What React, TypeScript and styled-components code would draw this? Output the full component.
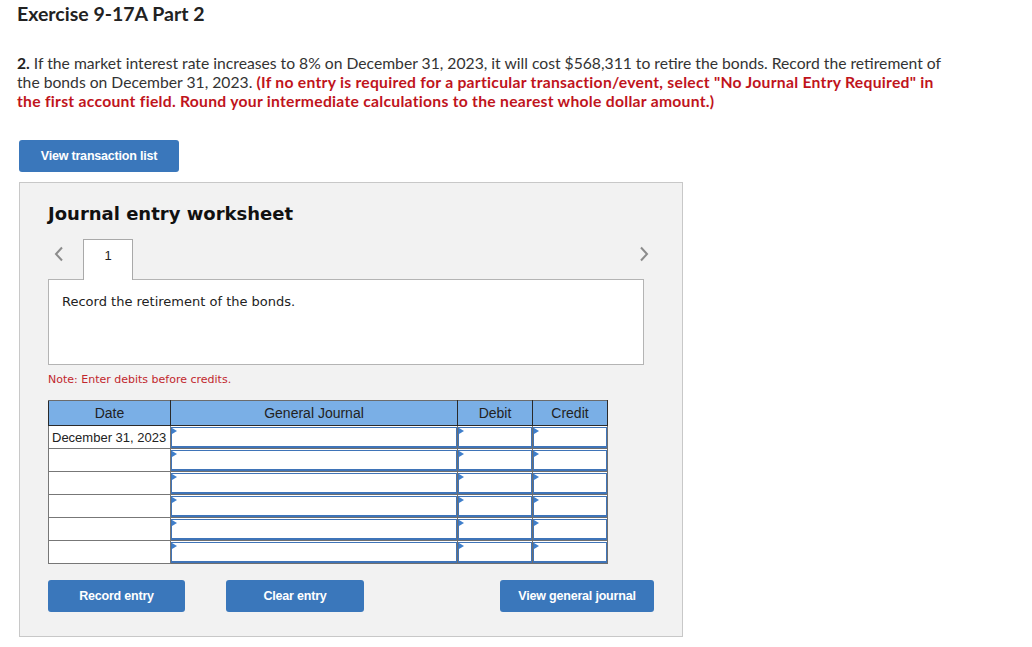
import React from "react";
import styled, { createGlobalStyle } from "styled-components";

const GlobalStyle = createGlobalStyle`
  html, body {
    margin: 0;
    padding: 0;
    background: #ffffff;
  }
  body {
    font-family: "Lato", "Liberation Sans", sans-serif;
    color: #333333;
  }
`;

const Page = styled.div`
  padding: 3px 17px 0 17px;
  width: 1000px;
`;

const Title = styled.h1`
  margin: 0;
  font-family: "Lato", "Liberation Sans", sans-serif;
  font-size: 19.5px;
  font-weight: 700;
  line-height: 22px;
  color: #222222;
`;

const Question = styled.p`
  margin: 29px 0 0 0;
  font-size: 15.7px;
  line-height: 19px;
  color: #333333;
  white-space: nowrap;
`;

const Lead = styled.b`
  font-weight: 700;
  color: #222222;
`;

const Warning = styled.b`
  font-weight: 700;
  color: #c0141c;
  letter-spacing: 0.27px;
`;

const Button = styled.button<{ $width: number }>`
  width: ${(p) => p.$width}px;
  height: 32px;
  border: none;
  border-radius: 3px;
  background: #3a77bb;
  color: #ffffff;
  font-family: "Liberation Sans Narrow", "Liberation Sans", sans-serif;
  font-weight: 700;
  font-size: 12.5px;
  letter-spacing: -0.2px;
  cursor: pointer;
  padding: 0;
`;

const TopAction = styled.div`
  margin: 29px 0 0 2px;
`;

const Panel = styled.section`
  margin: 10px 0 0 2px;
  width: 634px;
  height: 453px;
  box-sizing: content-box;
  background: #f2f2f2;
  border: 1px solid #c8c8c8;
  padding: 0 0 0 28px;
  display: flex;
  flex-direction: column;
  font-family: "DejaVu Sans", Verdana, sans-serif;
`;

const PanelTitle = styled.h2`
  margin: 20px 0 0 0;
  font-family: "DejaVu Sans", Verdana, sans-serif;
  font-size: 18px;
  font-weight: 700;
  line-height: 22px;
  color: #111111;
`;

const TabRow = styled.div`
  margin-top: 14px;
  width: 607px;
  height: 41px;
  display: flex;
  align-items: flex-start;
  position: relative;
  z-index: 1;
`;

const Arrow = styled.button`
  width: 22px;
  height: 30px;
  border: none;
  background: transparent;
  padding: 0;
  display: flex;
  align-items: center;
  justify-content: center;
`;

const Tab = styled.div`
  margin-left: 13px;
  width: 50px;
  height: 41px;
  box-sizing: border-box;
  background: #ffffff;
  border: 1px solid #a9a9a9;
  border-bottom: none;
  font-family: "Liberation Sans", Arial, sans-serif;
  font-size: 13px;
  color: #222222;
  text-align: center;
  padding-top: 8px;
`;

const Spacer = styled.div`
  flex: 1;
`;

const Prompt = styled.div`
  margin-top: -1px;
  width: 596px;
  height: 86px;
  box-sizing: border-box;
  background: #ffffff;
  border: 1px solid #b4b4b4;
  padding: 14px 13px;
  font-size: 13px;
  color: #222222;
`;

const Note = styled.div`
  margin-top: 8px;
  font-size: 11px;
  color: #c1272d;
`;

const Table = styled.table`
  margin-top: 14px;
  width: 559px;
  border-collapse: collapse;
  font-family: "Liberation Sans", Arial, sans-serif;
  font-size: 13px;
  table-layout: fixed;
`;

const Th = styled.th<{ $width: number }>`
  width: ${(p) => p.$width}px;
  height: 25px;
  box-sizing: border-box;
  background: #7aafe6;
  border: 1px solid #2a2a2a;
  border-top-color: #6b6b6b;
  font-weight: 400;
  font-size: 14px;
  color: #222222;
  padding: 0;
  text-align: center;
`;

const DateCell = styled.td`
  height: 23px;
  box-sizing: border-box;
  background: #ffffff;
  border: 1px solid #777777;
  padding: 0 3px;
  color: #222222;
  white-space: nowrap;
`;

const InputCell = styled.td`
  height: 23px;
  box-sizing: border-box;
  border: 1px solid #6f6f6f;
  padding: 0;
  background: #ffffff;
`;

const Field = styled.div`
  position: relative;
  height: 21px;
  box-sizing: border-box;
  border: 1px solid #3f74b8;
  border-bottom-width: 2px;
  background: #ffffff;

  &::before {
    content: "";
    position: absolute;
    left: 0;
    top: 0;
    border-top: 3.5px solid transparent;
    border-bottom: 3.5px solid transparent;
    border-left: 5px solid #3f7fcb;
  }
`;

const Actions = styled.div`
  margin-top: 16px;
  width: 606px;
  display: flex;
  gap: 41px;
`;

const Chevron = ({ dir }: { dir: "left" | "right" }) => (
  <svg width="10" height="16" viewBox="0 0 10 16">
    <path
      d={dir === "left" ? "M8 1.5 L2 8 L8 14.5" : "M2 1.5 L8 8 L2 14.5"}
      fill="none"
      stroke="#8c8c8c"
      strokeWidth="2"
    />
  </svg>
);

const rows = ["December 31, 2023", "", "", "", "", ""];

export default function App() {
  return (
    <>
      <GlobalStyle />
      <Page>
        <Title>Exercise 9-17A Part 2</Title>
        <Question>
          <Lead>2.</Lead> If the market interest rate increases to 8% on December 31, 2023, it will
          cost $568,311 to retire the bonds. Record the retirement of
          <br />
          the bonds on December 31, 2023.{" "}
          <Warning>
            (If no entry is required for a particular transaction/event, select "No Journal Entry
            Required" in
            <br />
            the first account field. Round your intermediate calculations to the nearest whole
            dollar amount.)
          </Warning>
        </Question>

        <TopAction>
          <Button $width={160}>View transaction list</Button>
        </TopAction>

        <Panel>
          <PanelTitle>Journal entry worksheet</PanelTitle>

          <TabRow>
            <Arrow>
              <Chevron dir="left" />
            </Arrow>
            <Tab>1</Tab>
            <Spacer />
            <Arrow>
              <Chevron dir="right" />
            </Arrow>
          </TabRow>

          <Prompt>Record the retirement of the bonds.</Prompt>
          <Note>Note: Enter debits before credits.</Note>

          <Table>
            <thead>
              <tr>
                <Th $width={122}>Date</Th>
                <Th $width={287}>General Journal</Th>
                <Th $width={75}>Debit</Th>
                <Th $width={75}>Credit</Th>
              </tr>
            </thead>
            <tbody>
              {rows.map((d, i) => (
                <tr key={i}>
                  <DateCell>{d}</DateCell>
                  <InputCell>
                    <Field />
                  </InputCell>
                  <InputCell>
                    <Field />
                  </InputCell>
                  <InputCell>
                    <Field />
                  </InputCell>
                </tr>
              ))}
            </tbody>
          </Table>

          <Actions>
            <Button $width={137}>Record entry</Button>
            <Button $width={138}>Clear entry</Button>
            <Spacer />
            <Button $width={154}>View general journal</Button>
          </Actions>
        </Panel>
      </Page>
    </>
  );
}
